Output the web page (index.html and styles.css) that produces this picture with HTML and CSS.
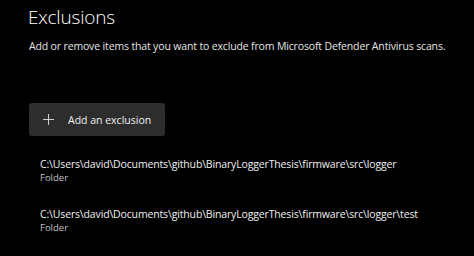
FILE: index.html
```html
<!DOCTYPE html>
<html>
<head>
<meta charset="utf-8">
<link rel="stylesheet" href="styles.css">
</head>
<body>
<main class="page">
  <h1 class="title">Exclusions</h1>
  <p class="desc">Add or remove items that you want to exclude from Microsoft Defender Antivirus scans.</p>
  <button class="add-btn">
    <svg class="plus" width="11" height="11" viewBox="0 0 11 11"><path d="M5.5 0V11M0 5.5H11" stroke="#d0d0d0" stroke-width="1"/></svg>
    <span>Add an exclusion</span>
  </button>
  <ul class="list">
    <li class="item">
      <div class="path">C:\Users\david\Documents\github\BinaryLoggerThesis\firmware\src\logger</div>
      <div class="kind">Folder</div>
    </li>
    <li class="item">
      <div class="path">C:\Users\david\Documents\github\BinaryLoggerThesis\firmware\src\logger\test</div>
      <div class="kind">Folder</div>
    </li>
  </ul>
</main>
</body>
</html>
```

FILE: styles.css
```css
html, body {
  margin: 0;
  padding: 0;
  background: #000;
  width: 474px;
  height: 256px;
  overflow: hidden;
}
.page {
  font-family: "Open Sans", "Noto Sans", sans-serif;
  color: #fff;
  padding: 2px 0 0 28px;
  display: flex;
  flex-direction: column;
  align-items: flex-start;
}
.title {
  margin: 0;
  font-weight: 300;
  font-size: 19px;
  line-height: 30px;
  letter-spacing: -0.2px;
}
.desc {
  margin: 6px 0 0 1px;
  font-size: 10.5px;
  line-height: 16px;
  color: #e6e6e6;
  letter-spacing: -0.15px;
}
.add-btn {
  margin: 49px 0 0 1px;
  width: 136px;
  height: 33px;
  background: #2d2d2d;
  border: none;
  border-radius: 3px;
  display: flex;
  align-items: center;
  gap: 14px;
  padding: 0 0 0 14px;
  font-family: inherit;
  font-size: 10.5px;
  color: #f0f0f0;
}
.list {
  list-style: none;
  margin: 21px 0 0 12px;
  padding: 0;
  display: flex;
  flex-direction: column;
  gap: 22px;
}
.item .path {
  font-size: 10.5px;
  line-height: 14px;
  color: #f0f0f0;
  letter-spacing: -0.15px;
}
.item .kind {
  font-size: 9.5px;
  line-height: 14px;
  color: #c4c4c4;
}
```
